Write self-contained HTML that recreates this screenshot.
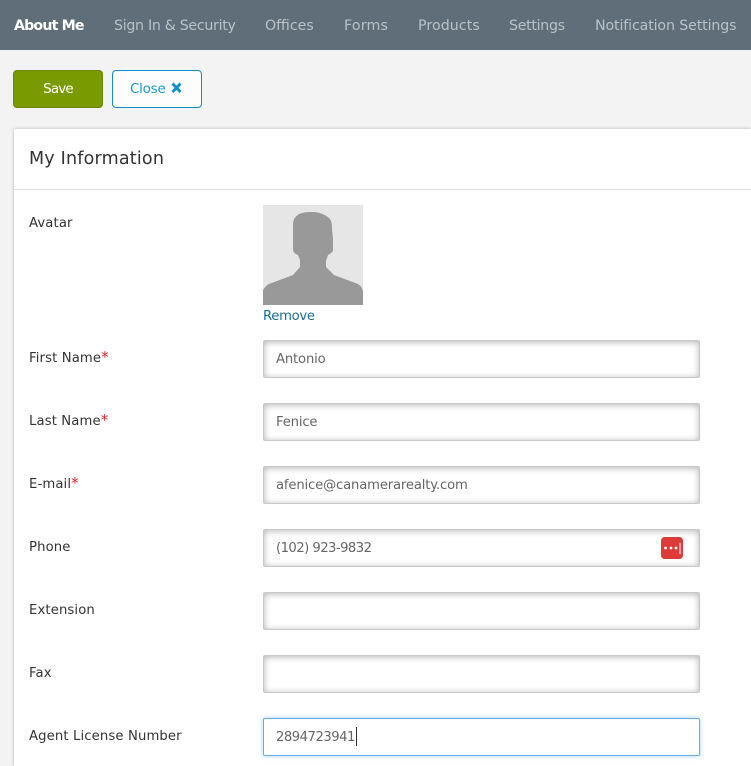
<!DOCTYPE html>
<html><head><meta charset="utf-8"><style>
html,body{margin:0;padding:0}
body{width:751px;height:766px;overflow:hidden;position:relative;background:#f3f3f3;font-family:"DejaVu Sans","Liberation Sans",sans-serif;color:#333}
.a{position:absolute;white-space:nowrap}
.nav{left:0;top:0;width:751px;height:50px;background:#5f6e79}
.n{top:16px;font-size:14.2px;line-height:20px;color:#b9c1c7;letter-spacing:-.18px}
.card{left:14px;top:129px;width:737px;height:637px;background:#fff;box-shadow:0 0 3px rgba(0,0,0,.28);border-radius:2px 0 0 0}
.l{left:29px;font-size:13.2px;line-height:18px;color:#333;letter-spacing:.13px}
.l i{font-style:normal;color:#d9262b;font-size:15px;line-height:14px;letter-spacing:0}
.f{left:263px;width:435px;height:36px;border:1px solid #c8c8c8;border-radius:2px;background:#fff;box-shadow:inset 0 1px 7px rgba(0,0,0,.3);}
.t{left:276px;font-size:13.2px;line-height:18px;color:#666;letter-spacing:-.17px}
</style></head><body>
<div class="a nav"></div>
<div class="a n" style="left:14px;color:#fff;font-weight:bold;letter-spacing:-.85px">About Me</div>
<div class="a n" style="left:114px;letter-spacing:-.3px">Sign In &amp; Security</div>
<div class="a n" style="left:265px;letter-spacing:0">Offices</div>
<div class="a n" style="left:344px;letter-spacing:.2px">Forms</div>
<div class="a n" style="left:418px;letter-spacing:.07px">Products</div>
<div class="a n" style="left:509px;letter-spacing:-.3px">Settings</div>
<div class="a n" style="left:595px;letter-spacing:-.13px">Notification Settings</div>

<div class="a" style="left:13px;top:70px;width:88px;height:36px;background:#7a9a01;border:1px solid #6b8700;border-radius:4px"></div>
<div class="a" style="left:13px;top:79px;width:90px;text-align:center;color:#fff;font-size:13.5px;line-height:20px;letter-spacing:-.85px">Save</div>
<div class="a" style="left:112px;top:70px;width:88px;height:36px;background:#fdfdfd;border:1px solid #0d8fcb;border-radius:4px"></div>
<div class="a" style="left:130px;top:79px;color:#1b95d0;font-size:13.5px;line-height:20px;letter-spacing:-.25px">Close</div>
<svg class="a" style="left:170px;top:82px" width="13" height="12" viewBox="0 0 13 12"><path d="M2.5 1.5L10.5 10M10.5 1.5L2.5 10" stroke="#0d8fcb" stroke-width="2.8" fill="none"/></svg>

<div class="a card"></div>
<div class="a" style="left:29px;top:147px;font-size:17.5px;line-height:24px;color:#333;letter-spacing:.2px">My Information</div>
<div class="a" style="left:14px;top:189px;width:737px;height:1px;background:#dcdcdc"></div>

<div class="a l" style="top:215px">Avatar</div>
<svg class="a" style="left:263px;top:205px" width="100" height="100" viewBox="0 0 100 100"><rect width="100" height="100" fill="#e6e6e6"/><path d="M0 100V85C2 82 4 80 6 79L30 70L37 62V55L35 50C32 49 30 47 30 44L30 33V20C30 14 32 12 36 9C41 7 46 7 50 7C56 7 63 10 66 13C69 16 69 20 69 24L70 34V45C70 47 67 49 65 50L63 56V62L71 70L95 79C98 81 100 84 100 87V100Z" fill="#999"/></svg>
<div class="a" style="left:263px;top:308px;font-size:13.2px;line-height:18px;color:#1c6d97;letter-spacing:-.3px">Remove</div>

<div class="a l" style="top:350px">First Name<i>*</i></div>
<div class="a f" style="top:340px"></div><div class="a t" style="top:351px">Antonio</div>
<div class="a l" style="top:413px">Last Name<i>*</i></div>
<div class="a f" style="top:403px"></div><div class="a t" style="top:414px">Fenice</div>
<div class="a l" style="top:476px">E-mail<i>*</i></div>
<div class="a f" style="top:466px"></div><div class="a t" style="top:477px">afenice@canamerarealty.com</div>
<div class="a l" style="top:539px">Phone</div>
<div class="a f" style="top:529px"></div><div class="a t" style="top:540px;letter-spacing:-.55px">(102) 923-9832</div>
<svg class="a" style="left:661px;top:537px" width="22" height="22" viewBox="0 0 22 22"><rect width="22" height="22" rx="3.5" fill="#dd3b39"/><circle cx="4.5" cy="11" r="1.4" fill="#fff"/><circle cx="10" cy="11" r="1.4" fill="#fff"/><circle cx="15" cy="11" r="1.4" fill="#fff"/><rect x="18.5" y="6" width="1" height="11" fill="#fff"/></svg>
<div class="a l" style="top:602px">Extension</div>
<div class="a f" style="top:592px"></div>
<div class="a l" style="top:665px">Fax</div>
<div class="a f" style="top:655px"></div>
<div class="a l" style="top:728px">Agent License Number</div>
<div class="a" style="left:263px;top:718px;width:435px;height:36px;border:1px solid #66afe9;border-radius:2px;background:#fff;box-shadow:0 0 5px rgba(102,175,233,.6)"></div>
<div class="a t" style="top:729px;letter-spacing:-.5px">2894723941</div>
<div class="a" style="left:356px;top:727px;width:1px;height:19px;background:#333"></div>
</body></html>
